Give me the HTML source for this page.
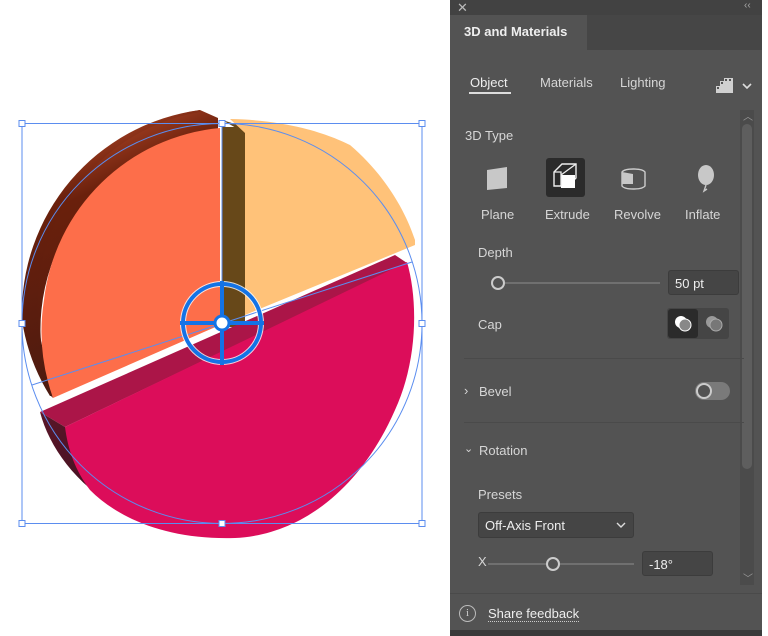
<!DOCTYPE html>
<html><head><meta charset="utf-8">
<style>
*{margin:0;padding:0;box-sizing:border-box}
body{width:768px;height:636px;background:#fff;position:relative;overflow:hidden;font-family:"Liberation Sans",sans-serif}
.p{position:absolute;left:450px;top:0;width:312px;height:636px;background:#535353;color:#d6d6d6;font-size:13px}
.a{position:absolute;white-space:nowrap}
.field{position:absolute;background:#454545;border:1px solid #3c3c3c;border-radius:3px;color:#eee;font-size:13px;padding:5px 6px}
.line{position:absolute;height:2px;background:#707070}
.knob{position:absolute;width:14px;height:14px;border:2px solid #ccc;border-radius:50%;background:#535353}
.sep{position:absolute;left:14px;width:280px;height:1px;background:#4a4a4a}
</style></head><body>
<svg width="450" height="636" style="position:absolute;left:0;top:0">
<defs>
<linearGradient id="g1" x1="0" y1="0" x2="0.3" y2="1">
<stop offset="0" stop-color="#e0603a"/><stop offset="0.35" stop-color="#6a200c"/><stop offset="1" stop-color="#4a1a10"/></linearGradient>
<linearGradient id="g2" x1="0" y1="0" x2="1" y2="1"><stop offset="0" stop-color="#5a1628"/><stop offset="1" stop-color="#3a1020"/></linearGradient>
</defs>
<!-- orange side -->
<path d="M200,110 L218,118 L218,135 A195,195 0 0 0 53,398 L50,395 A200,200 0 0 1 200,110 Z" fill="url(#g1)"/>
<path d="M200,110 A205,205 0 0 0 22,320 A200,200 0 0 0 50,396 L60,395 A195,195 0 0 1 200,112Z" fill="url(#g1)"/>
<!-- orange front -->
<path d="M220,128 L220,325 L53,398 A200,200 0 0 1 44,300 A195,195 0 0 1 220,128 Z" fill="#fd6e4a"/>
<!-- brown strip -->
<rect x="222" y="127" width="23" height="200" fill="#674819"/>
<path d="M222,120 L245,133 L245,127 Z" fill="#674819"/>
<!-- light orange -->
<path d="M230,119 C290,120 330,135 350,145 C385,175 405,210 415,240 L415,245 L245,315 L245,133 Z" fill="#ffc279"/>
<!-- magenta side -->
<path d="M40,412 L395,255 L407,263 L65,427 Z" fill="#ab1548"/>
<path d="M40,412 C50,450 80,490 130,515 L140,500 C100,475 75,450 65,427 Z" fill="url(#g2)"/>
<!-- magenta front -->
<path d="M65,427 L407,262 C418,300 418,360 395,410 C360,490 300,535 235,538 C170,540 120,520 90,490 C75,470 68,450 65,427 Z" fill="#dc0d5a"/>
<!-- selection -->
<g stroke="#5b8def" stroke-width="1" fill="none">
<rect x="22" y="123.5" width="400" height="400"/>
<circle cx="222" cy="323.5" r="200"/>
<line x1="32" y1="385" x2="412" y2="262"/>
<line x1="222" y1="123" x2="222" y2="323"/>
</g>
<g fill="#fff" stroke="#5b8def">
<rect x="19" y="120.5" width="6" height="6"/><rect x="219" y="120.5" width="6" height="6"/><rect x="419" y="120.5" width="6" height="6"/>
<rect x="19" y="320.5" width="6" height="6"/><rect x="419" y="320.5" width="6" height="6"/>
<rect x="19" y="520.5" width="6" height="6"/><rect x="219" y="520.5" width="6" height="6"/><rect x="419" y="520.5" width="6" height="6"/>
</g>
<g stroke="#fff" stroke-width="6" fill="none" opacity="0.8"><circle cx="222" cy="323" r="39"/></g>
<g stroke="#1473e6" stroke-width="4" fill="none">
<circle cx="222" cy="323" r="39"/>
<line x1="180" y1="323" x2="264" y2="323"/><line x1="222" y1="281" x2="222" y2="365"/>
</g>
<circle cx="222" cy="323" r="7" fill="#fff" stroke="#1473e6" stroke-width="3"/>
</svg>

<div class="p">
<div class="a" style="left:0;top:0;width:312px;height:15px;background:#424242"></div>
<div class="a" style="left:7px;top:0;font-size:13px;color:#bbb">✕</div>
<div class="a" style="left:294px;top:0;font-size:10px;color:#aaa">‹‹</div>
<div class="a" style="left:0;top:15px;width:312px;height:35px;background:#464646"></div>
<div class="a" style="left:0;top:15px;width:137px;height:35px;background:#535353"></div>
<div class="a" style="left:14px;top:24px;font-weight:bold;font-size:13px;color:#eee">3D and Materials</div>
<div class="a" style="left:20px;top:75px;color:#eee">Object</div>
<div class="a" style="left:19px;top:92px;width:42px;height:2px;background:#ddd"></div>
<div class="a" style="left:90px;top:75px">Materials</div>
<div class="a" style="left:170px;top:75px">Lighting</div>
<svg class="a" style="left:265px;top:76px" width="40" height="18"><path d="M1,10h4v7h-4zM5,5h4v12h-4zM9,2h9v15h-9z" fill="#d0d0d0"/><g fill="#535353"><rect x="2" y="11" width="2" height="2"/><rect x="6" y="6" width="2" height="2"/><rect x="10" y="3" width="2" height="2"/><rect x="14" y="3" width="2" height="2"/></g><path d="M28,8l4,4l4,-4" stroke="#ddd" stroke-width="1.6" fill="none"/></svg>
<!-- scrollbar -->
<div class="a" style="left:290px;top:110px;width:14px;height:475px;background:#4b4b4b"></div>
<div class="a" style="left:292px;top:124px;width:10px;height:345px;background:#5e5e5e;border-radius:5px"></div>
<div class="a" style="left:293px;top:108px;font-size:10px;color:#999">︿</div>
<div class="a" style="left:293px;top:570px;font-size:10px;color:#999">﹀</div>
<div class="a" style="left:15px;top:128px">3D Type</div>
<div class="a" style="left:96px;top:158px;width:39px;height:39px;background:#2b2b2b;border-radius:3px"></div>
<svg class="a" style="left:0;top:158px" width="290" height="40">
<path d="M37,12l20,-3v21l-20,2z" fill="#c8c8c8"/>
<path d="M104,14l8,-8h14v14l-8,8h-14z" fill="none" stroke="#eee" stroke-width="1.4"/><path d="M104,14l6,-0v14z" fill="none"/><path d="M111,17h14v13h-14z" fill="#fff"/><path d="M104,14h7v14M111,17l15,-11" stroke="#eee" stroke-width="1.3" fill="none"/>
<path d="M172,14c3,-4 20,-4 23,0v14c-3,4 -20,4 -23,0z" fill="none" stroke="#ccc" stroke-width="1.4"/><path d="M172,14v12h11v-10z" fill="#c8c8c8"/>
<ellipse cx="256" cy="17" rx="8" ry="10" fill="#c8c8c8"/><path d="M256,27l-2,6l3,-2" stroke="#c8c8c8" stroke-width="1.4" fill="none"/>
</svg>
<div class="a" style="left:31px;top:207px">Plane</div>
<div class="a" style="left:95px;top:207px">Extrude</div>
<div class="a" style="left:164px;top:207px">Revolve</div>
<div class="a" style="left:235px;top:207px">Inflate</div>
<div class="a" style="left:28px;top:245px">Depth</div>
<div class="line" style="left:55px;top:282px;width:155px"></div>
<div class="knob" style="left:41px;top:276px"></div>
<div class="field" style="left:218px;top:270px;width:71px;height:25px">50 pt</div>
<div class="a" style="left:28px;top:317px">Cap</div>
<div class="a" style="left:217px;top:308px;width:62px;height:31px;background:#454545;border-radius:3px"></div>
<div class="a" style="left:218px;top:309px;width:30px;height:29px;background:#2b2b2b;border-radius:3px"></div>
<svg class="a" style="left:218px;top:309px" width="62" height="30"><circle cx="13" cy="13" r="6" fill="#fff"/><circle cx="17" cy="16" r="6" fill="#888" stroke="#fff" stroke-width="1"/><circle cx="44" cy="13" r="6" fill="#999"/><circle cx="48" cy="16" r="6" fill="#777" stroke="#aaa" stroke-width="1"/></svg>
<div class="sep" style="top:358px"></div>
<div class="a" style="left:14px;top:383px">›</div>
<div class="a" style="left:29px;top:384px">Bevel</div>
<div class="a" style="left:245px;top:382px;width:35px;height:18px;background:#7a7a7a;border-radius:9px"></div>
<div class="a" style="left:246px;top:383px;width:16px;height:16px;border:2px solid #ccc;border-radius:50%;background:#535353"></div>
<div class="sep" style="top:422px"></div>
<div class="a" style="left:14px;top:442px;font-size:11px">⌄</div>
<div class="a" style="left:29px;top:443px">Rotation</div>
<div class="a" style="left:28px;top:487px">Presets</div>
<div class="field" style="left:28px;top:512px;width:156px;height:26px">Off-Axis Front</div>
<svg class="a" style="left:166px;top:520px" width="12" height="10"><path d="M1,3l4,4l4,-4" stroke="#ddd" stroke-width="1.4" fill="none"/></svg>
<div class="a" style="left:28px;top:554px">X</div>
<div class="line" style="left:38px;top:563px;width:146px"></div>
<div class="knob" style="left:96px;top:557px"></div>
<div class="field" style="left:192px;top:551px;width:71px;height:25px">-18°</div>
<div class="a" style="left:0;top:593px;width:312px;height:1px;background:#4a4a4a"></div>
<div class="a" style="left:9px;top:605px;width:17px;height:17px;border:1.5px solid #bbb;border-radius:50%;font-size:11px;text-align:center;line-height:14px;color:#ccc;font-family:'Liberation Serif',serif">i</div>
<div class="a" style="left:38px;top:606px;color:#eee;border-bottom:1px dotted #ccc;line-height:15px">Share feedback</div>
<div class="a" style="left:0;top:630px;width:312px;height:6px;background:#3a3a3a"></div>
</div>
<div style="position:absolute;left:762px;top:0;width:6px;height:636px;background:#fff"></div>
</body></html>
